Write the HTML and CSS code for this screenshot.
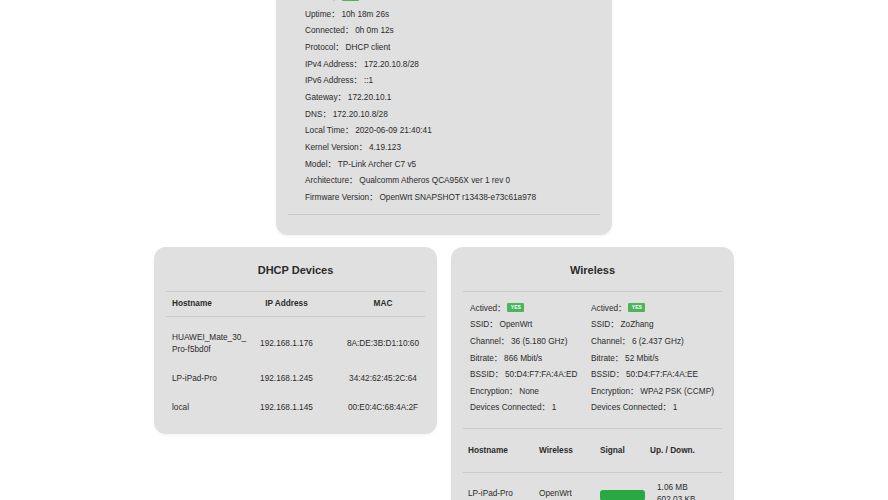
FILE: index.html
```html
<!DOCTYPE html>
<html lang="en">
<head>
  <meta charset="UTF-8" />
  <meta name="viewport" content="width=device-width, initial-scale=1.0"/>
  <title>Router Status</title>
  <link rel="stylesheet" href="styles.css">
</head>
<body>
  <div class="page">

    <section class="card card-status">
      <h2 class="card-title">Network</h2>
      <div class="info-list">
        <div class="info-row"><span class="label">Actived：</span><span class="badge">YES</span></div>
        <div class="info-row"><span class="label">Uptime：</span>10h 18m 26s</div>
        <div class="info-row"><span class="label">Connected：</span>0h 0m 12s</div>
        <div class="info-row"><span class="label">Protocol：</span>DHCP client</div>
        <div class="info-row"><span class="label">IPv4 Address：</span>172.20.10.8/28</div>
        <div class="info-row"><span class="label">IPv6 Address：</span>::1</div>
        <div class="info-row"><span class="label">Gateway：</span>172.20.10.1</div>
        <div class="info-row"><span class="label">DNS：</span>172.20.10.8/28</div>
        <div class="info-row"><span class="label">Local Time：</span>2020-06-09 21:40:41</div>
        <div class="info-row"><span class="label">Kernel Version：</span>4.19.123</div>
        <div class="info-row"><span class="label">Model：</span>TP-Link Archer C7 v5</div>
        <div class="info-row"><span class="label">Architecture：</span>Qualcomm Atheros QCA956X ver 1 rev 0</div>
        <div class="info-row"><span class="label">Firmware Version：</span>OpenWrt SNAPSHOT r13438-e73c61a978</div>
      </div>
      <div class="card-foot"></div>
    </section>

    <div class="card-grid">
      <section class="card card-dhcp">
        <h2 class="card-title">DHCP Devices</h2>
        <table class="dhcp-table">
          <thead>
            <tr>
              <th class="col-host">Hostname</th>
              <th class="col-ip">IP Address</th>
              <th class="col-mac">MAC</th>
            </tr>
          </thead>
          <tbody>
            <tr>
              <td class="col-host">HUAWEI_Mate_30_<wbr>Pro-f5bd0f</td>
              <td class="col-ip">192.168.1.176</td>
              <td class="col-mac">8A:DE:3B:D1:10:60</td>
            </tr>
            <tr>
              <td class="col-host">LP-iPad-Pro</td>
              <td class="col-ip">192.168.1.245</td>
              <td class="col-mac">34:42:62:45:2C:64</td>
            </tr>
            <tr>
              <td class="col-host">local</td>
              <td class="col-ip">192.168.1.145</td>
              <td class="col-mac">00:E0:4C:68:4A:2F</td>
            </tr>
          </tbody>
        </table>
      </section>

      <section class="card card-wireless">
        <h2 class="card-title">Wireless</h2>
        <div class="radio-grid">
          <div class="radio">
            <div class="info-row"><span class="label">Actived：</span><span class="badge">YES</span></div>
            <div class="info-row"><span class="label">SSID：</span>OpenWrt</div>
            <div class="info-row"><span class="label">Channel：</span>36 (5.180 GHz)</div>
            <div class="info-row"><span class="label">Bitrate：</span>866 Mbit/s</div>
            <div class="info-row"><span class="label">BSSID：</span>50:D4:F7:FA:4A:ED</div>
            <div class="info-row"><span class="label">Encryption：</span>None</div>
            <div class="info-row"><span class="label">Devices Connected：</span>1</div>
          </div>
          <div class="radio">
            <div class="info-row"><span class="label">Actived：</span><span class="badge">YES</span></div>
            <div class="info-row"><span class="label">SSID：</span>ZoZhang</div>
            <div class="info-row"><span class="label">Channel：</span>6 (2.437 GHz)</div>
            <div class="info-row"><span class="label">Bitrate：</span>52 Mbit/s</div>
            <div class="info-row"><span class="label">BSSID：</span>50:D4:F7:FA:4A:EE</div>
            <div class="info-row"><span class="label">Encryption：</span>WPA2 PSK (CCMP)</div>
            <div class="info-row"><span class="label">Devices Connected：</span>1</div>
          </div>
        </div>
        <table class="assoc-table">
          <thead>
            <tr>
              <th class="col-a">Hostname</th>
              <th class="col-b">Wireless</th>
              <th class="col-c">Signal</th>
              <th class="col-d">Up. / Down.</th>
            </tr>
          </thead>
          <tbody>
            <tr>
              <td class="col-a">LP-iPad-Pro</td>
              <td class="col-b">OpenWrt</td>
              <td class="col-c"><div class="signal"></div></td>
              <td class="col-d traffic">1.06 MB<br>602.03 KB</td>
            </tr>
          </tbody>
        </table>
      </section>
    </div>

  </div>
</body>
</html>
```

FILE: styles.css
```css
body {
  margin: 0;
  background: #fff;
  font-family: "Liberation Sans", Arial, "Noto Sans CJK SC", sans-serif;
  font-size: 8.25px;
  color: #2b2b2b;
}
.page {
  display: flex;
  flex-direction: column;
  align-items: center;
  gap: 12px;
  margin-top: -62px;
}
.card {
  background: #e0e0e0;
  border-radius: 12px;
  padding: 0 12px;
  box-shadow: 0 1px 3px rgba(0, 0, 0, 0.06);
}
.card-status {
  width: 312px;
}
.card-status .card-title {
  height: 43px;
  line-height: 45px;
}
.card-grid {
  display: flex;
  gap: 14px;
  align-items: flex-start;
}
.card-dhcp, .card-wireless {
  width: 259px;
}
.card-dhcp {
  padding-bottom: 12px;
}
.card-wireless {
  height: 300px;
}
.card-title {
  margin: 0;
  height: 44px;
  line-height: 46px;
  text-align: center;
  font-size: 11px;
  font-weight: bold;
  color: #2b2b2b;
  border-bottom: 1px solid #c9c9c9;
}
.info-list {
  padding: 8px 0 7px 17px;
  border-bottom: 1px solid #c9c9c9;
}
.card-foot {
  height: 20px;
}
.info-row {
  height: 16.67px;
  line-height: 16.67px;
  white-space: nowrap;
}
.label {
  margin-right: 2px;
}
.badge {
  display: inline-block;
  vertical-align: middle;
  width: 17px;
  height: 9px;
  line-height: 9px;
  margin-top: -2px;
  text-align: center;
  font-size: 5px;
  font-weight: bold;
  color: #fff;
  background: #4cb45a;
  border-radius: 1px;
}
.radio-grid {
  display: grid;
  grid-template-columns: 121px 1fr;
  padding: 9px 0 11px 7px;
  border-bottom: 1px solid #c9c9c9;
}

table {
  width: 100%;
  border-collapse: collapse;
  border-spacing: 0;
}
th {
  font-weight: bold;
  text-align: left;
  line-height: 12px;
  padding: 6px 6px;
  border-bottom: 1px solid #c9c9c9;
}
td {
  line-height: 12px;
  padding: 8.5px 6px;
  vertical-align: middle;
}
tbody tr:first-child td {
  padding-top: 15px;
}
.dhcp-table .col-host {
  width: 68px;
}
.dhcp-table .col-ip {
  width: 62px;
  text-align: center;
  padding-right: 20px;
}
.dhcp-table .col-mac {
  text-align: center;
  padding-left: 12px;
}

.assoc-table {
  table-layout: fixed;
}
.assoc-table th {
  padding: 15.5px 5px;
}
.assoc-table td {
  padding-left: 5px;
  padding-right: 5px;
}
.assoc-table tbody tr:first-child td {
  padding-top: 9px;
}
.assoc-table .col-a { width: 61px; }
.assoc-table .col-b { width: 51px; }
.assoc-table .col-c { width: 40px; }
.assoc-table td.traffic {
  padding-left: 12px;
}
.signal {
  width: 45px;
  height: 11px;
  margin-top: 2px;
  background: #29a843;
  border-radius: 3px;
}
```
